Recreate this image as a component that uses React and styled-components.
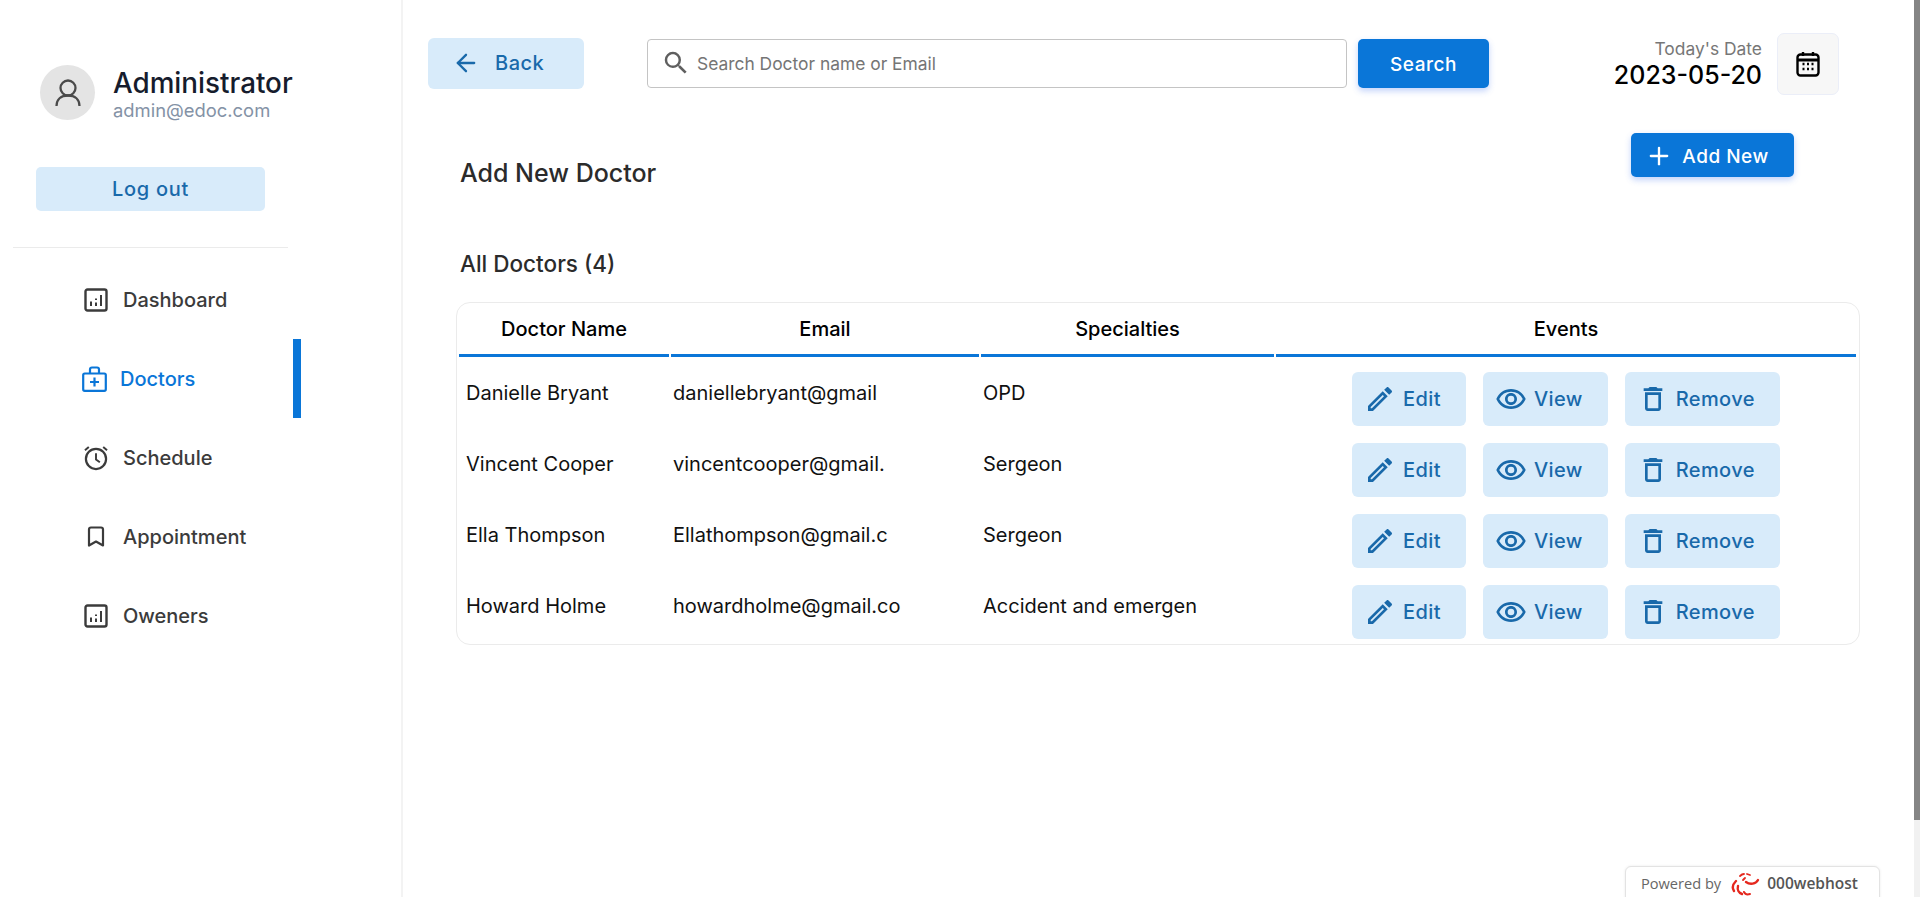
import React from 'react';
import styled, { createGlobalStyle } from 'styled-components';
import { ArrowLeft, Bookmark, Plus } from 'lucide-react';
import { MdOutlineEdit, MdOutlineRemoveRedEye, MdOutlineDelete, MdSearch } from 'react-icons/md';

const GlobalStyle = createGlobalStyle`
  html, body {
    margin: 0;
    padding: 0;
    height: 100%;
    overflow: hidden;
    background: #fff;
    font-family: Inter, "Liberation Sans", sans-serif;
  }
  * {
    box-sizing: border-box;
  }
`;

const Page = styled.div`
  display: flex;
  width: 1920px;
  height: 897px;
  position: relative;
  overflow: hidden;
`;

const Sidebar = styled.aside`
  flex: 0 0 403px;
  border-right: 2px solid #f3f3f3;
  padding-top: 65px;
`;

const Profile = styled.div`
  display: flex;
  align-items: center;
  gap: 18px;
  height: 55px;
  margin-left: 40px;
`;

const Avatar = styled.div`
  width: 55px;
  height: 55px;
  border-radius: 50%;
  background: #e4e4e4;
  color: #4a4a4a;
  display: flex;
  align-items: center;
  justify-content: center;
`;

const ProfileName = styled.div`
  font-size: 27.8px;
  line-height: 36px;
  font-weight: 500;
  color: #161c2d;
`;

const ProfileMail = styled.div`
  font-size: 18.4px;
  line-height: 19px;
  color: #8492a6;
`;

const LogoutButton = styled.button`
  display: block;
  width: 229px;
  height: 44px;
  margin: 47px 0 0 36px;
  border: 0;
  border-radius: 5px;
  background: #d8ebfa;
  color: #1969aa;
  font: 500 20px Inter, sans-serif;
  letter-spacing: 0.7px;
`;

const Divider = styled.div`
  width: 275px;
  height: 1px;
  margin: 36px 0 12px 13px;
  background: #ebebeb;
`;

const NavItem = styled.div`
  width: 301px;
  height: 79px;
  display: flex;
  align-items: center;
  gap: ${p => (p.$active ? '13px' : '15px')};
  padding-left: ${p => (p.$active ? '82px' : '84px')};
  border-right: 8px solid ${p => (p.$active ? '#0a76d8' : 'transparent')};
  color: ${p => (p.$active ? '#0a76d8' : '#3b3b3b')};
  font-size: 20px;
  font-weight: 500;
`;

const NavIcon = styled.span`
  display: flex;
  width: ${p => (p.$active ? '25px' : '24px')};
  justify-content: center;
`;

const Main = styled.main`
  flex: 1;
  min-width: 0;
`;

const TopBar = styled.div`
  display: flex;
  align-items: center;
  height: 62px;
  margin-top: 33px;
  padding: 0 75px 0 25px;
`;

const BackButton = styled.button`
  display: flex;
  align-items: center;
  gap: 15px;
  width: 156px;
  height: 51px;
  margin-bottom: 2px;
  padding-left: 24px;
  border: 0;
  border-radius: 6px;
  background: #d8ebfa;
  color: #1969aa;
  font: 500 20px Inter, sans-serif;
  letter-spacing: 0.5px;
`;

const SearchBox = styled.div`
  display: flex;
  align-items: center;
  gap: 6px;
  width: 700px;
  height: 49px;
  margin: 0 0 2px 63px;
  padding-left: 13px;
  border: 1px solid #c4c4c4;
  border-radius: 4px;
  color: #5f5f5f;
`;

const SearchHint = styled.span`
  font-size: 17.4px;
  color: #757575;
`;

const PrimaryButton = styled.button`
  display: flex;
  align-items: center;
  justify-content: center;
  gap: 9px;
  height: ${p => p.$height}px;
  width: ${p => p.$width}px;
  margin-left: ${p => p.$gap || 0}px;
  margin-bottom: ${p => p.$lift || 0}px;
  padding: 2px ${p => p.$trim || 0}px 0 0;
  border: 0;
  border-radius: 5px;
  background: #0a76d8;
  color: #fff;
  font: 500 19px Inter, sans-serif;
  letter-spacing: 0.5px;
  box-shadow: 0 3px 6px rgba(57, 108, 240, 0.3);
`;

const DateBlock = styled.div`
  margin-left: auto;
  text-align: right;
`;

const DateLabel = styled.div`
  font-size: 17.4px;
  line-height: 20px;
  color: #777;
`;

const DateValue = styled.div`
  font-size: 25px;
  line-height: 30px;
  font-weight: 500;
  color: #000;
  margin-top: 1px;
`;

const CalendarBox = styled.div`
  width: 62px;
  height: 62px;
  margin-left: 15px;
  display: flex;
  align-items: center;
  justify-content: center;
  border: 1px solid #ebeef8;
  border-radius: 7px;
  background: #f7f7f7;
`;

const TitleRow = styled.div`
  display: flex;
  justify-content: space-between;
  align-items: flex-start;
  margin-top: 38px;
  padding: 0 120px 0 57px;
`;

const Title = styled.h2`
  margin: 25px 0 0;
  font-size: 25px;
  line-height: 30px;
  font-weight: 500;
  color: #2b2b2b;
`;

const SubTitle = styled.h3`
  margin: 62px 0 0 57px;
  font-size: 22.5px;
  line-height: 28px;
  font-weight: 500;
  color: #2b2b2b;
`;

const TableCard = styled.div`
  width: 1404px;
  margin: 24px 0 0 53px;
  border: 1px solid #ebebeb;
  border-radius: 14px;
  padding-bottom: 1px;
`;

const Table = styled.table`
  width: 1401px;
  table-layout: fixed;
  border-collapse: separate;
  border-spacing: 2px;
`;

const HeadCell = styled.th`
  height: 52px;
  padding: 0 0 1px;
  border-bottom: 3px solid #0a76d8;
  font-size: 20px;
  font-weight: 500;
  color: #000;
  text-align: center;
`;

const Cell = styled.td`
  height: 69px;
  padding: 0 0 2px ${p => p.$indent || 2}px;
  font-size: 20px;
  color: #111;
  white-space: nowrap;
  overflow: hidden;
`;

const EventsCell = styled.td`
  padding: 13px 0 2px 76px;
  vertical-align: top;
`;

const Actions = styled.div`
  display: flex;
  gap: 17px;
`;

const ActionButton = styled.button`
  display: flex;
  align-items: center;
  gap: 7px;
  height: 54px;
  padding: 0 25px 0 12px;
  border: 0;
  border-radius: 6px;
  background: #d8ebfa;
  color: #1969aa;
  font: 500 20px Inter, sans-serif;
  letter-spacing: 0.4px;
`;

const Scrollbar = styled.div`
  flex: 0 0 6px;
  height: 100%;
  background: #f1f1f1;
`;

const ScrollThumb = styled.div`
  height: 820px;
  background: #858585;
`;

const HostBadge = styled.div`
  position: absolute;
  left: 1625px;
  top: 866px;
  width: 255px;
  height: 40px;
  display: flex;
  align-items: flex-start;
  padding: 6px 0 0 15px;
  border: 1px solid #e3e3e3;
  border-radius: 6px;
  background: #fff;
  font-family: "Open Sans", sans-serif;
  box-shadow: 0 0 3px rgba(0, 0, 0, 0.08);
`;

const HostLabel = styled.span`
  font-size: 14.6px;
  line-height: 20px;
  font-weight: 500;
  color: #666;
`;

const HostName = styled.span`
  font-size: 15.5px;
  line-height: 20px;
  font-weight: 600;
  color: #555;
  margin-left: 2px;
`;

const ChartIcon = () => (
  <svg width="24" height="24" viewBox="0 0 24 24" fill="none" stroke="currentColor" strokeWidth="2.4">
    <rect x="1.500" y="1.500" width="21" height="21" rx="2" />
    <path d="M7 13.500V18M12 14.500V18M12 10.500v1.500M17 7v11" strokeWidth="2" />
  </svg>
);

const MedicalCaseIcon = () => (
  <svg width="25" height="26" viewBox="0 0 25 26" fill="none" stroke="currentColor" strokeWidth="2.200">
    <rect x="1.200" y="7.500" width="22.600" height="17.300" rx="1.500" />
    <path d="M8 7.500V3.500a2 2 0 0 1 2-2h5a2 2 0 0 1 2 2v4" />
    <path d="M12.500 11.500v9M8 16h9" />
  </svg>
);

const AlarmIcon = () => (
  <svg width="25" height="26" viewBox="0 0 25 26" fill="none" stroke="currentColor" strokeWidth="2.300">
    <circle cx="12.500" cy="14" r="10.500" />
    <path d="M12.500 8v6.500l4 3" strokeWidth="2" />
    <path d="M1 5l4-3.500M24 5l-4-3.500" strokeWidth="2" />
  </svg>
);

const CalendarIcon = () => (
  <svg width="24" height="26" viewBox="0 0 24 26" fill="none" stroke="#000">
    <rect x="1.500" y="3.500" width="21" height="21" rx="3" strokeWidth="2.400" />
    <path d="M1.500 9h21" strokeWidth="3" />
    <path d="M7 1v4M17 1v4" strokeWidth="2.400" />
    <path d="M6.500 13h2M11 13h2M15.500 13h2M6.500 18h2M11 18h2M15.500 18h2" strokeWidth="2.400" />
  </svg>
);

const UserIcon = () => (
  <svg width="26" height="28" viewBox="0 0 26 28" fill="none" stroke="currentColor" strokeWidth="2.300">
    <circle cx="13" cy="9" r="7.500" />
    <path d="M1.500 27c0-6.500 4.500-10.500 11.500-10.500S24.500 20.500 24.500 27" />
  </svg>
);

const SwirlLogo = () => (
  <svg width="30" height="24" viewBox="0 0 30 24" fill="none" stroke="#e5281e" strokeLinecap="round" style={{ margin: '-1px 5px 0 9px' }}>
    <path d="M4 19c-2-3-1-7 2-10" strokeWidth="2.400" />
    <path d="M12 22c-3-1-5-4-4-8" strokeWidth="2.400" />
    <path d="M28 8c-2 4-8 5-12 2" strokeWidth="2.400" />
    <path d="M20 22c-3 1-5 0-6-2" strokeWidth="2" />
    <path d="M10 4c1-1 2-2 4-2M17 2l3 1M13 8l2-2" strokeWidth="1.800" />
  </svg>
);

const navItems = [
  { label: 'Dashboard', icon: <ChartIcon /> },
  { label: 'Doctors', icon: <MedicalCaseIcon />, active: true },
  { label: 'Schedule', icon: <AlarmIcon /> },
  { label: 'Appointment', icon: <Bookmark size={27} strokeWidth={2.200} /> },
  { label: 'Oweners', icon: <ChartIcon /> },
];

const doctors = [
  { name: 'Danielle Bryant', email: 'daniellebryant@gmail', specialty: 'OPD' },
  { name: 'Vincent Cooper', email: 'vincentcooper@gmail.', specialty: 'Sergeon' },
  { name: 'Ella Thompson', email: 'Ellathompson@gmail.c', specialty: 'Sergeon' },
  { name: 'Howard Holme', email: 'howardholme@gmail.co', specialty: 'Accident and emergen' },
];

function App() {
  return (
    <Page>
      <GlobalStyle />
      <Sidebar>
        <Profile>
          <Avatar>
            <UserIcon />
          </Avatar>
          <div>
            <ProfileName>Administrator</ProfileName>
            <ProfileMail>admin@edoc.com</ProfileMail>
          </div>
        </Profile>
        <LogoutButton>Log out</LogoutButton>
        <Divider />
        <nav>
          {navItems.map(item => (
            <NavItem key={item.label} $active={item.active}>
              <NavIcon $active={item.active}>{item.icon}</NavIcon>
              {item.label}
            </NavItem>
          ))}
        </nav>
      </Sidebar>
      <Main>
        <TopBar>
          <BackButton>
            <ArrowLeft size={28} strokeWidth={2} />
            Back
          </BackButton>
          <SearchBox>
            <MdSearch size={30} />
            <SearchHint>Search Doctor name or Email</SearchHint>
          </SearchBox>
          <PrimaryButton $width={131} $height={49} $gap={11} $lift={2}>
            Search
          </PrimaryButton>
          <DateBlock>
            <DateLabel>Today's Date</DateLabel>
            <DateValue>2023-05-20</DateValue>
          </DateBlock>
          <CalendarBox>
            <CalendarIcon />
          </CalendarBox>
        </TopBar>
        <TitleRow>
          <Title>Add New Doctor</Title>
          <PrimaryButton $width={163} $height={44} $trim={11}>
            <Plus size={28} strokeWidth={2} />
            Add New
          </PrimaryButton>
        </TitleRow>
        <SubTitle>All Doctors (4)</SubTitle>
        <TableCard>
          <Table>
            <colgroup>
              <col style={{ width: 210 }} />
              <col style={{ width: 308 }} />
              <col style={{ width: 293 }} />
              <col style={{ width: 580 }} />
            </colgroup>
            <thead>
              <tr>
                <HeadCell>Doctor Name</HeadCell>
                <HeadCell>Email</HeadCell>
                <HeadCell>Specialties</HeadCell>
                <HeadCell>Events</HeadCell>
              </tr>
            </thead>
            <tbody>
              {doctors.map(doc => (
                <tr key={doc.name}>
                  <Cell $indent={7}>{doc.name}</Cell>
                  <Cell>{doc.email}</Cell>
                  <Cell>{doc.specialty}</Cell>
                  <EventsCell>
                    <Actions>
                      <ActionButton>
                        <MdOutlineEdit size={32} />
                        Edit
                      </ActionButton>
                      <ActionButton>
                        <MdOutlineRemoveRedEye size={32} />
                        View
                      </ActionButton>
                      <ActionButton>
                        <MdOutlineDelete size={32} />
                        Remove
                      </ActionButton>
                    </Actions>
                  </EventsCell>
                </tr>
              ))}
            </tbody>
          </Table>
        </TableCard>
      </Main>
      <Scrollbar>
        <ScrollThumb />
      </Scrollbar>
      <HostBadge>
        <HostLabel>Powered by</HostLabel>
        <SwirlLogo />
        <HostName>000webhost</HostName>
      </HostBadge>
    </Page>
  );
}

export default App;
